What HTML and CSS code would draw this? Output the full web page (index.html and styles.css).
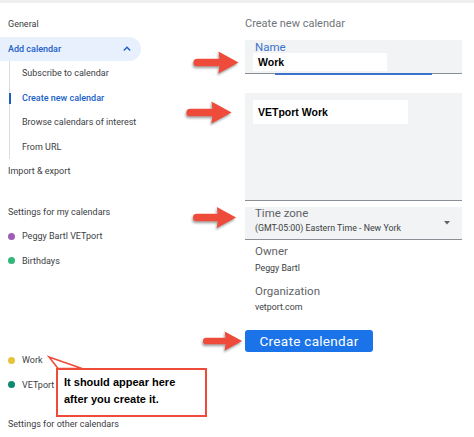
FILE: index.html
```html
<!DOCTYPE html>
<html>
<head>
<meta charset="utf-8">
<link rel="stylesheet" href="styles.css">
</head>
<body>
<div class="topbar"></div>
<div class="page">
  <nav class="side">
    <div class="nav-item">General</div>
    <div class="nav-item nav-open">
      <span>Add calendar</span>
      <svg class="chev" width="8" height="5" viewBox="0 0 8 5"><path d="M0.8 4.4 L4 1.2 L7.2 4.4" fill="none" stroke="#1a5fc8" stroke-width="1.4"/></svg>
    </div>
    <div class="sub">
      <div class="sub-item">Subscribe to calendar</div>
      <div class="sub-item sub-active">Create new calendar</div>
      <div class="sub-item">Browse calendars of interest</div>
      <div class="sub-item">From URL</div>
    </div>
    <div class="nav-item">Import &amp; export</div>
    <div class="section">Settings for my calendars</div>
    <div class="cal"><span class="dot dot-purple"></span>Peggy Bartl VETport</div>
    <div class="cal"><span class="dot dot-green"></span>Birthdays</div>
    <div class="cal cal-work"><span class="dot dot-yellow"></span>Work</div>
    <div class="cal"><span class="dot dot-teal"></span>VETport</div>
    <div class="section section-other">Settings for other calendars</div>
  </nav>

  <main class="content">
    <div class="heading">Create new calendar</div>

    <div class="field field-name">
      <div class="field-label label-blue">Name</div>
      <div class="paste paste-name">Work</div>
      <div class="focus-line"></div>
    </div>

    <div class="field field-desc">
      <div class="paste paste-desc">VETport Work</div>
    </div>

    <div class="field field-tz">
      <div class="tz-text">
        <div class="field-label">Time zone</div>
        <div class="tz-value">(GMT-05:00) Eastern Time - New York</div>
      </div>
      <svg class="caret" width="6" height="4" viewBox="0 0 6 4"><path d="M0 0 L6 0 L3 3.5 Z" fill="#5f6368"/></svg>
    </div>

    <div class="info-label info-owner">Owner</div>
    <div class="info-value info-peggy">Peggy Bartl</div>
    <div class="info-label info-org">Organization</div>
    <div class="info-value info-vet">vetport.com</div>

    <button class="create-btn">Create calendar</button>
  </main>
</div>

<!-- annotation arrows -->
<svg class="arrow arrow-1" viewBox="0 0 48 26"><path d="M4 9 L27 9 L26 1.5 L47 13 L26 24.5 L27 17 L4 17 Q0 17 0 13 Q0 9 4 9 Z"/></svg>
<svg class="arrow arrow-2" viewBox="0 0 48 26"><path d="M4 9 L27 9 L26 1.5 L47 13 L26 24.5 L27 17 L4 17 Q0 17 0 13 Q0 9 4 9 Z"/></svg>
<svg class="arrow arrow-3" viewBox="0 0 48 26"><path d="M4 9 L27 9 L26 1.5 L47 13 L26 24.5 L27 17 L4 17 Q0 17 0 13 Q0 9 4 9 Z"/></svg>
<svg class="arrow arrow-4" viewBox="0 0 48 26"><path d="M4 9 L27 9 L26 1.5 L47 13 L26 24.5 L27 17 L4 17 Q0 17 0 13 Q0 9 4 9 Z"/></svg>

<div class="callout">It should appear here<br>after you create it.</div>
<svg class="pointer" width="40" height="16" viewBox="0 0 40 16"><path d="M1 1 L34 12.5 L10 12.5 Z" fill="#fff" stroke="#ee4b3a" stroke-width="1.6" stroke-linejoin="miter"/></svg>
</body>
</html>
```

FILE: styles.css
```css
* { box-sizing: border-box; }

html, body {
  margin: 0;
  padding: 0;
  background: #fff;
  width: 474px;
  height: 437px;
  overflow: hidden;
  font-family: Roboto, "Noto Sans", Arial, sans-serif;
  color: #3c4043;
  position: relative;
}

.topbar {
  height: 3px;
  background: #efefef;
}

.page {
  display: grid;
  grid-template-columns: 245px 217px;
}

/* ---------- sidebar ---------- */
.side {
  padding-top: 9px;
  font-size: 9px;
}

.nav-item {
  height: 24.5px;
  display: flex;
  align-items: center;
  padding-left: 8px;
  color: #3c4043;
}

.nav-open {
  width: 141px;
  background: #e8f0fe;
  border-radius: 0 12px 12px 0;
  color: #1a5fc8;
  font-weight: 500;
  justify-content: space-between;
  padding-right: 10px;
}

.chev { display: block; }

.sub {
  margin-left: 9px;
  border-left: 1px solid #dadce0;
}

.sub-item {
  height: 24.5px;
  display: flex;
  align-items: center;
  padding-left: 12px;
  color: #3c4043;
  position: relative;
}

.sub-active {
  color: #1a5fc8;
  font-weight: 500;
}

.sub-active::before {
  content: "";
  position: absolute;
  left: -1.5px;
  top: 7px;
  width: 2px;
  height: 11px;
  background: #1a5fc8;
}

.section {
  height: 24px;
  display: flex;
  align-items: center;
  padding-left: 8px;
  margin-top: 16.5px;
  color: #3c4043;
}

.section-other { margin-top: 15.5px; }

.cal {
  height: 24.5px;
  display: flex;
  align-items: center;
  padding-left: 8px;
  color: #3c4043;
}

.cal-work { margin-top: 74.75px; }

.dot {
  width: 7px;
  height: 7px;
  border-radius: 50%;
  margin-right: 7px;
  flex: none;
}
.dot-purple { background: #9e5cb4; }
.dot-green { background: #33b679; }
.dot-yellow { background: #e7c23b; }
.dot-teal { background: #0d8a73; }

/* ---------- content ---------- */
.content {
  padding-top: 14px;
}

.heading {
  font-size: 11px;
  line-height: 14px;
  color: #70757a;
}

.field {
  background: #f1f3f4;
  border-bottom: 1px solid #8a8f95;
  position: relative;
}

.field-name {
  margin-top: 9px;
  height: 34px;
}

.field-label {
  font-size: 11.5px;
  line-height: 14px;
  padding-left: 10px;
  color: #5f6368;
}

.label-blue { color: #3a72cc; }

.paste {
  background: #fff;
  font-family: "Liberation Sans", Arial, sans-serif;
  font-weight: bold;
  color: #000;
  font-size: 10.5px;
  display: flex;
  align-items: center;
  padding-left: 5px;
  margin-left: 8px;
}

.paste-name {
  width: 134px;
  height: 18px;
  margin-top: -1px;
}

.focus-line {
  position: absolute;
  left: 30px;
  bottom: -1.5px;
  width: 157px;
  height: 2px;
  background: #3a72cc;
}

.field-desc {
  margin-top: 19px;
  height: 108px;
  padding-top: 7px;
}

.paste-desc {
  width: 155px;
  height: 24px;
}

.field-tz {
  margin-top: 6px;
  height: 33px;
  display: flex;
  align-items: center;
  justify-content: space-between;
  padding-right: 12px;
}

.field-tz .field-label { line-height: 12px; }

.tz-text { align-self: flex-start; }

.tz-value {
  font-size: 8.8px;
  line-height: 12px;
  margin-top: 3px;
  padding-left: 10px;
  color: #3c4043;
}

.caret { display: block; margin-top: -1px; }

.info-label {
  font-size: 11.5px;
  line-height: 14px;
  color: #5f6368;
  padding-left: 10px;
}

.info-value {
  font-size: 8.8px;
  line-height: 12px;
  color: #3c4043;
  padding-left: 10px;
}

.info-owner { margin-top: 4px; }
.info-peggy { margin-top: 4px; }
.info-org { margin-top: 10px; }
.info-vet { margin-top: 3px; }

.create-btn {
  display: block;
  margin-top: 17px;
  width: 128px;
  height: 22px;
  border: none;
  border-radius: 3px;
  background: #1a73e8;
  color: #fff;
  font-family: Roboto, Arial, sans-serif;
  font-size: 13.5px;
  font-weight: 400;
  padding: 0;
  letter-spacing: 0.3px;
}

/* ---------- annotations ---------- */
.arrow {
  position: absolute;
  fill: #ee4b3a;
  filter: drop-shadow(-1px 2px 1.2px rgba(0, 0, 0, 0.35));
  overflow: visible;
}

.arrow-1 { left: 193px; top: 50px; width: 47px; height: 25px; }
.arrow-2 { left: 186px; top: 100px; width: 47px; height: 25px; }
.arrow-3 { left: 193px; top: 205px; width: 44px; height: 25px; }
.arrow-4 { left: 203px; top: 329px; width: 40px; height: 24px; }

.callout {
  position: absolute;
  left: 56px;
  top: 368px;
  width: 151px;
  height: 49px;
  border: 2px solid #ee4b3a;
  background: #fff;
  font-family: "Liberation Sans", Arial, sans-serif;
  font-weight: bold;
  font-size: 11px;
  line-height: 17px;
  color: #000;
  padding: 3.5px 0 0 6px;
}

.pointer {
  position: absolute;
  left: 48px;
  top: 356px;
  overflow: visible;
}
```
